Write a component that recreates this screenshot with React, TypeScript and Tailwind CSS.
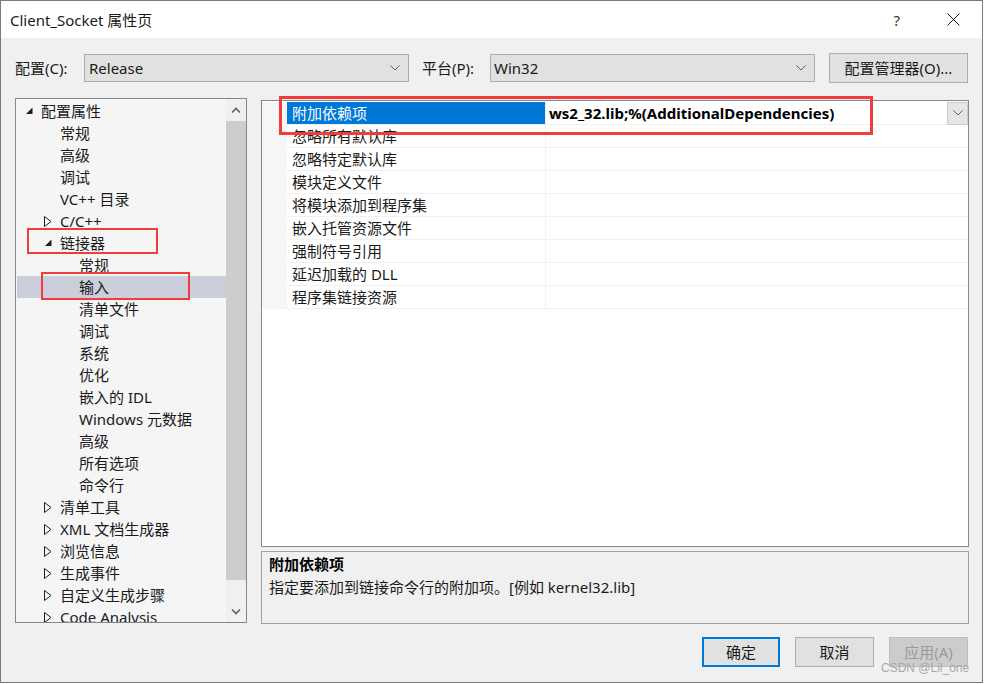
import React from "react";

type Item = { t: string; lv: number; ex?: "open" | "closed"; sel?: boolean };

const tree: Item[] = [
  { t: "配置属性", lv: 0, ex: "open" },
  { t: "常规", lv: 1 },
  { t: "高级", lv: 1 },
  { t: "调试", lv: 1 },
  { t: "VC++ 目录", lv: 1 },
  { t: "C/C++", lv: 1, ex: "closed" },
  { t: "链接器", lv: 1, ex: "open" },
  { t: "常规", lv: 2 },
  { t: "输入", lv: 2, sel: true },
  { t: "清单文件", lv: 2 },
  { t: "调试", lv: 2 },
  { t: "系统", lv: 2 },
  { t: "优化", lv: 2 },
  { t: "嵌入的 IDL", lv: 2 },
  { t: "Windows 元数据", lv: 2 },
  { t: "高级", lv: 2 },
  { t: "所有选项", lv: 2 },
  { t: "命令行", lv: 2 },
  { t: "清单工具", lv: 1, ex: "closed" },
  { t: "XML 文档生成器", lv: 1, ex: "closed" },
  { t: "浏览信息", lv: 1, ex: "closed" },
  { t: "生成事件", lv: 1, ex: "closed" },
  { t: "自定义生成步骤", lv: 1, ex: "closed" },
  { t: "Code Analysis", lv: 1, ex: "closed" },
];

const indent = ["pl-[9px]", "pl-[28px]", "pl-[47px]"];

const props = [
  "附加依赖项",
  "忽略所有默认库",
  "忽略特定默认库",
  "模块定义文件",
  "将模块添加到程序集",
  "嵌入托管资源文件",
  "强制符号引用",
  "延迟加载的 DLL",
  "程序集链接资源",
];

const Chevron = ({ cls = "" }: { cls?: string }) => (
  <svg width="10" height="6" viewBox="0 0 10 6" className={cls}>
    <polyline points="0.5,0.5 5,5 9.5,0.5" fill="none" stroke="#606060" strokeWidth="1" />
  </svg>
);

const Expander = ({ ex }: { ex?: "open" | "closed" }) => (
  <div className="w-[16px] h-[22px] flex items-center">
    {ex === "open" && (
      <svg width="8" height="8" viewBox="0 0 8 8">
        <polygon points="7.5,0.5 7.5,7 1,7" fill="#1e1e1e" />
      </svg>
    )}
    {ex === "closed" && (
      <svg width="8" height="11" viewBox="0 0 8 11">
        <polygon points="0.5,0.5 7,5.5 0.5,10.5" fill="none" stroke="#1e1e1e" strokeWidth="1" />
      </svg>
    )}
  </div>
);

export default function App() {
  return (
    <div
      className="relative w-[984px] h-[684px] bg-white overflow-hidden text-[15px] text-[#1a1a1a]"
      style={{ fontFamily: "'Noto Sans', 'Noto Sans CJK SC', sans-serif" }}
    >
      <div className="w-[983px] h-[683px] border border-[#7a7a7a] flex flex-col">
        {/* Title bar */}
        <div className="h-[37px] bg-white flex items-center pl-[9px] shrink-0">
          <span className="leading-[20px]">Client_Socket 属性页</span>
          <span className="ml-auto leading-[20px] mr-[47px] text-[#333]">?</span>
          <svg width="13" height="13" viewBox="0 0 13 13" className="mr-[22px]">
            <line x1="0.5" y1="0.5" x2="12.5" y2="12.5" stroke="#1a1a1a" strokeWidth="1" />
            <line x1="12.5" y1="0.5" x2="0.5" y2="12.5" stroke="#1a1a1a" strokeWidth="1" />
          </svg>
        </div>

        {/* Body */}
        <div className="flex-1 bg-[#f0f0f0] flex flex-col pl-[14px] pr-[14px]">
          {/* Config row */}
          <div className="flex items-center mt-[15px] h-[30px]">
            <span className="w-[69px] leading-[20px]">配置(C):</span>
            <div className="w-[325px] h-[28px] bg-[#e1e1e1] border border-[#adadad] flex items-center pl-[4px] pr-[8px]">
              <span className="leading-[20px]">Release</span>
              <Chevron cls="ml-auto" />
            </div>
            <span className="ml-[13px] w-[68px] leading-[20px]">平台(P):</span>
            <div className="w-[325px] h-[28px] bg-[#e1e1e1] border border-[#adadad] flex items-center pl-[3px] pr-[8px]">
              <span className="leading-[20px]">Win32</span>
              <Chevron cls="ml-auto" />
            </div>
            <div className="ml-[14px] w-[139px] h-[30px] bg-[#e1e1e1] border border-[#adadad] flex items-center justify-center">
              <span className="leading-[20px]">配置管理器(O)...</span>
            </div>
          </div>

          {/* Main */}
          <div className="flex mt-[15px] gap-[14px]">
            {/* Tree */}
            <div className="w-[233px] h-[525px] border border-[#828790] bg-[#f5f5f5] flex">
              <div className="w-[210px] overflow-hidden pt-[1px]">
                {tree.map((it, i) => (
                  <div
                    key={i}
                    className={`h-[22px] flex items-center ${indent[it.lv]} ${it.sel ? "bg-[#cccedb] ml-[1px]" : ""}`}
                  >
                    <Expander ex={it.ex} />
                    <span className={`leading-[22px] whitespace-nowrap ${it.sel ? "-ml-[1px]" : ""}`}>{it.t}</span>
                  </div>
                ))}
              </div>
              <div className="w-[20px] flex flex-col bg-[#f0f0f0]">
                <div className="h-[22px] flex items-center justify-center">
                  <svg width="10" height="6" viewBox="0 0 10 6">
                    <polyline points="1,5.5 5,1.5 9,5.5" fill="none" stroke="#606060" strokeWidth="1.6" />
                  </svg>
                </div>
                <div className="h-[459px] bg-[#cdcdcd]" />
                <div className="flex-1" />
                <div className="h-[21px] flex items-center justify-center">
                  <svg width="10" height="6" viewBox="0 0 10 6">
                    <polyline points="1,0.5 5,4.5 9,0.5" fill="none" stroke="#606060" strokeWidth="1.6" />
                  </svg>
                </div>
              </div>
            </div>

            {/* Right side */}
            <div className="flex flex-col mt-[2px]">
              <div className="w-[708px] h-[447px] border border-[#828790] bg-white pt-[1px]">
                <div className="flex">
                  <div className="w-[25px] h-[207px] bg-[#f5f6f8]" />
                  <div className="flex-1">
                    {props.map((p, i) => (
                      <div key={i} className="flex h-[23px] border-b border-[#f0f0f0]">
                        <div
                          className={`w-[259px] border-r border-[#f0f0f0] pl-[5px] flex items-center ${i === 0 ? "bg-[#0078d7] text-white" : ""}`}
                        >
                          <span className="leading-[20px]">{p}</span>
                        </div>
                        <div className="flex-1 flex items-center pl-[3px]">
                          {i === 0 && (
                            <>
                              <span className="leading-[20px] font-bold text-black">ws2_32.lib;%(AdditionalDependencies)</span>
                              <div className="ml-auto w-[21px] h-[23px] bg-[#e5e5e5] border border-[#cccccc] flex items-center justify-center">
                                <Chevron />
                              </div>
                            </>
                          )}
                        </div>
                      </div>
                    ))}
                  </div>
                </div>
              </div>
              <div className="mt-[4px] w-[708px] h-[73px] border border-[#a0a0a0] bg-[#f0f0f0] pl-[7px] pt-[1px]">
                <div className="font-bold leading-[23px] text-black">附加依赖项</div>
                <div className="leading-[23px]">指定要添加到链接命令行的附加项。[例如 kernel32.lib]</div>
              </div>
            </div>
          </div>

          {/* Buttons */}
          <div className="flex justify-end gap-[15px] mt-[13px]">
            <div className="w-[78px] h-[30px] bg-[#e1e1e1] border-2 border-[#0078d7] flex items-center justify-center">
              <span className="leading-[20px]">确定</span>
            </div>
            <div className="w-[79px] h-[30px] bg-[#e1e1e1] border border-[#adadad] flex items-center justify-center">
              <span className="leading-[20px]">取消</span>
            </div>
            <div className="w-[79px] h-[30px] bg-[#cccccc] border border-[#bfbfbf] flex items-center justify-center">
              <span className="leading-[20px] text-[#9a9a9a]">应用(A)</span>
            </div>
          </div>
        </div>
      </div>

      {/* Red annotation boxes */}
      <div className="absolute left-[27px] top-[228px] w-[131px] h-[26px] border-2 border-[#f23b3b]" />
      <div className="absolute left-[41px] top-[272px] w-[149px] h-[28px] border-2 border-[#f23b3b]" />
      <div className="absolute left-[279px] top-[96px] w-[594px] h-[39px] border-[3px] border-[#f23b3b]" />

      {/* Watermark */}
      <div
        className="absolute left-[881px] top-[661px] text-[12px] leading-[15px] text-[#a8a8a8] whitespace-nowrap"
        style={{ fontFamily: "'Liberation Sans', sans-serif" }}
      >
        CSDN @Lil_one
      </div>
    </div>
  );
}
